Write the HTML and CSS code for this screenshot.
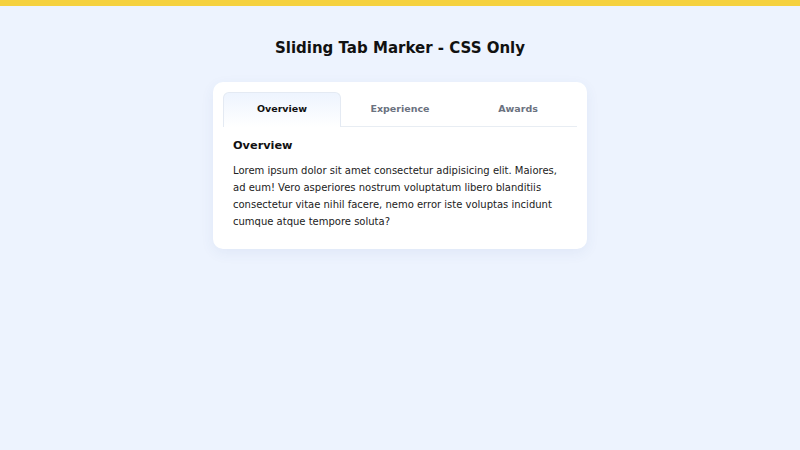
FILE: index.html
```html
<!DOCTYPE html>
<html lang="en">
<head>
  <meta charset="UTF-8" />
  <meta name="viewport" content="width=device-width, initial-scale=1.0"/>
  <title>Sliding Tab Marker</title>
  <link rel="stylesheet" href="styles.css">
</head>
<body>

<div class="top-bar"></div>

<h1 class="page-title">Sliding Tab Marker - CSS Only</h1>

<div class="tabs-card">
  <!-- TABS -->
  <div class="tabs">
    <input type="radio" name="tab" id="tab-overview" checked>
    <label for="tab-overview" class="tab">Overview</label>
    <input type="radio" name="tab" id="tab-experience">
    <label for="tab-experience" class="tab">Experience</label>
    <input type="radio" name="tab" id="tab-awards">
    <label for="tab-awards" class="tab">Awards</label>
    <span class="marker"></span>
  </div>

  <!-- PANEL -->
  <div class="tab-panel">
    <h3>Overview</h3>
    <p>Lorem ipsum dolor sit amet consectetur adipisicing elit. Maiores, ad eum! Vero asperiores nostrum voluptatum libero blanditiis consectetur vitae nihil facere, nemo error iste voluptas incidunt cumque atque tempore soluta?</p>
  </div>
</div>

</body>
</html>
```

FILE: styles.css
```css
* {
  box-sizing: border-box;
  font-family: 'DejaVu Sans', sans-serif;
}

body {
  margin: 0;
  background: #edf3fe;
  min-height: 100vh;
  display: flex;
  flex-direction: column;
  align-items: center;
}

.top-bar {
  width: 100%;
  height: 6px;
  background: #f5d13f;
}

.page-title {
  margin: 33px 0 25px;
  font-size: 15px;
  line-height: 18px;
  font-weight: bold;
  color: #111;
}

.tabs-card {
  width: 374px;
  background: #fff;
  border-radius: 10px;
  padding: 10px;
  box-shadow: 0 4px 14px rgba(60, 90, 150, 0.07);
}

.tabs {
  position: relative;
  display: flex;
  border-bottom: 1px solid #e8edf3;
}

.tabs input {
  display: none;
}

.tab {
  position: relative;
  z-index: 1;
  flex: 1;
  height: 34px;
  padding-bottom: 2px;
  display: flex;
  align-items: center;
  justify-content: center;
  font-size: 9.5px;
  font-weight: bold;
  color: #6b7280;
  cursor: pointer;
}

.tabs input:checked + .tab {
  color: #111;
}

/* the marker slides under whichever label is checked */
.marker {
  position: absolute;
  left: 0;
  top: 0;
  width: calc(100% / 3);
  height: 35px;
  border: 1px solid #e4eaf3;
  border-bottom: none;
  border-radius: 6px 6px 0 0;
  background: linear-gradient(180deg, #eef4fe 0%, #ffffff 100%);
  transition: left 0.3s;
}

#tab-experience:checked ~ .marker {
  left: calc(100% / 3);
}

#tab-awards:checked ~ .marker {
  left: calc(200% / 3);
}

.tab-panel {
  padding: 12px 10px 9px;
}

.tab-panel h3 {
  margin: 0 0 10px;
  font-size: 11.3px;
  line-height: 13px;
  color: #111;
}

.tab-panel p {
  margin: 0;
  font-size: 10px;
  line-height: 17px;
  color: #222;
}
```
